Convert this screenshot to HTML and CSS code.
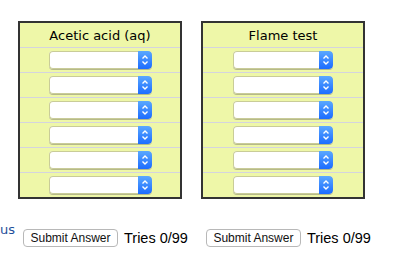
FILE: index.html
```html
<!DOCTYPE html>
<html>
<head>
<meta charset="utf-8">
<link rel="stylesheet" href="styles.css">
</head>
<body>
<div class="page">
  <div class="tables">
    <div class="col">
      <div class="head">Acetic acid (aq)</div>
      <div class="row"><div class="sel"><span class="arrow"><svg viewBox="0 0 14 18" width="14" height="18"><path d="M4.5 7.5 L7 5 L9.5 7.5 M4.5 10.5 L7 13 L9.5 10.5" fill="none" stroke="#fff" stroke-width="1.4"/></svg></span></div></div>
      <div class="row"><div class="sel"><span class="arrow"><svg viewBox="0 0 14 18" width="14" height="18"><path d="M4.5 7.5 L7 5 L9.5 7.5 M4.5 10.5 L7 13 L9.5 10.5" fill="none" stroke="#fff" stroke-width="1.4"/></svg></span></div></div>
      <div class="row"><div class="sel"><span class="arrow"><svg viewBox="0 0 14 18" width="14" height="18"><path d="M4.5 7.5 L7 5 L9.5 7.5 M4.5 10.5 L7 13 L9.5 10.5" fill="none" stroke="#fff" stroke-width="1.4"/></svg></span></div></div>
      <div class="row"><div class="sel"><span class="arrow"><svg viewBox="0 0 14 18" width="14" height="18"><path d="M4.5 7.5 L7 5 L9.5 7.5 M4.5 10.5 L7 13 L9.5 10.5" fill="none" stroke="#fff" stroke-width="1.4"/></svg></span></div></div>
      <div class="row"><div class="sel"><span class="arrow"><svg viewBox="0 0 14 18" width="14" height="18"><path d="M4.5 7.5 L7 5 L9.5 7.5 M4.5 10.5 L7 13 L9.5 10.5" fill="none" stroke="#fff" stroke-width="1.4"/></svg></span></div></div>
      <div class="row"><div class="sel"><span class="arrow"><svg viewBox="0 0 14 18" width="14" height="18"><path d="M4.5 7.5 L7 5 L9.5 7.5 M4.5 10.5 L7 13 L9.5 10.5" fill="none" stroke="#fff" stroke-width="1.4"/></svg></span></div></div>
    </div>
    <div class="col">
      <div class="head">Flame test</div>
      <div class="row"><div class="sel narrow"><span class="arrow"><svg viewBox="0 0 14 18" width="14" height="18"><path d="M4.5 7.5 L7 5 L9.5 7.5 M4.5 10.5 L7 13 L9.5 10.5" fill="none" stroke="#fff" stroke-width="1.4"/></svg></span></div></div>
      <div class="row"><div class="sel narrow"><span class="arrow"><svg viewBox="0 0 14 18" width="14" height="18"><path d="M4.5 7.5 L7 5 L9.5 7.5 M4.5 10.5 L7 13 L9.5 10.5" fill="none" stroke="#fff" stroke-width="1.4"/></svg></span></div></div>
      <div class="row"><div class="sel narrow"><span class="arrow"><svg viewBox="0 0 14 18" width="14" height="18"><path d="M4.5 7.5 L7 5 L9.5 7.5 M4.5 10.5 L7 13 L9.5 10.5" fill="none" stroke="#fff" stroke-width="1.4"/></svg></span></div></div>
      <div class="row"><div class="sel narrow"><span class="arrow"><svg viewBox="0 0 14 18" width="14" height="18"><path d="M4.5 7.5 L7 5 L9.5 7.5 M4.5 10.5 L7 13 L9.5 10.5" fill="none" stroke="#fff" stroke-width="1.4"/></svg></span></div></div>
      <div class="row"><div class="sel narrow"><span class="arrow"><svg viewBox="0 0 14 18" width="14" height="18"><path d="M4.5 7.5 L7 5 L9.5 7.5 M4.5 10.5 L7 13 L9.5 10.5" fill="none" stroke="#fff" stroke-width="1.4"/></svg></span></div></div>
      <div class="row"><div class="sel narrow"><span class="arrow"><svg viewBox="0 0 14 18" width="14" height="18"><path d="M4.5 7.5 L7 5 L9.5 7.5 M4.5 10.5 L7 13 L9.5 10.5" fill="none" stroke="#fff" stroke-width="1.4"/></svg></span></div></div>
    </div>
  </div>
  <div class="actions">
    <a class="link">us</a>
    <button class="submit first">Submit Answer</button>
    <span class="tries">Tries 0/99</span>
    <button class="submit second">Submit Answer</button>
    <span class="tries">Tries 0/99</span>
  </div>
</div>
</body>
</html>
```

FILE: styles.css
```css
html, body {
  margin: 0;
  padding: 0;
  background: #fff;
}
.page {
  padding-top: 21px;
}
.tables {
  display: flex;
  gap: 19px;
  padding-left: 18px;
}
.col {
  width: 164px;
  box-sizing: border-box;
  border: 2px solid #333;
  background: #eef7a8;
}
.head {
  height: 24px;
  box-sizing: border-box;
  display: flex;
  align-items: center;
  justify-content: center;
  font-family: "DejaVu Sans", Verdana, sans-serif;
  font-size: 13px;
  color: #000;
  padding-top: 1px;
}
.row {
  height: 25px;
  box-sizing: border-box;
  border-top: 1px solid #d4d4de;
  display: flex;
  align-items: center;
  justify-content: center;
}
.sel {
  width: 103px;
  height: 18px;
  box-sizing: border-box;
  background: #fff;
  border-radius: 4px;
  box-shadow: inset 0 0 0 1px #c9cc98, 0 1px 0 #b6b98a;
  display: flex;
  justify-content: flex-end;
  overflow: hidden;
}
.sel.narrow {
  width: 100px;
}
.arrow {
  width: 14px;
  height: 18px;
  background: linear-gradient(#5aa8ff, #1c6cff);
  border-radius: 0 4px 4px 0;
  display: block;
}
.arrow svg {
  display: block;
}
.actions {
  display: flex;
  align-items: center;
  margin-top: 30px;
  height: 18px;
}
.link {
  font-family: "DejaVu Sans", Verdana, sans-serif;
  font-size: 13px;
  color: #1f4f9a;
  width: 23px;
  position: relative;
  top: -9px;
}
.submit {
  font-family: "Liberation Sans", Arial, sans-serif;
  font-size: 12px;
  color: #111;
  background: #fff;
  border: 1px solid #b8b8b8;
  border-radius: 4px;
  height: 18px;
  padding: 0;
  width: 95px;
  margin: 0;
  white-space: nowrap;
}
.second {
  margin-left: 18px;
}
.tries {
  font-family: "Liberation Sans", Arial, sans-serif;
  font-size: 14.5px;
  color: #000;
  margin-left: 6px;
}
```
